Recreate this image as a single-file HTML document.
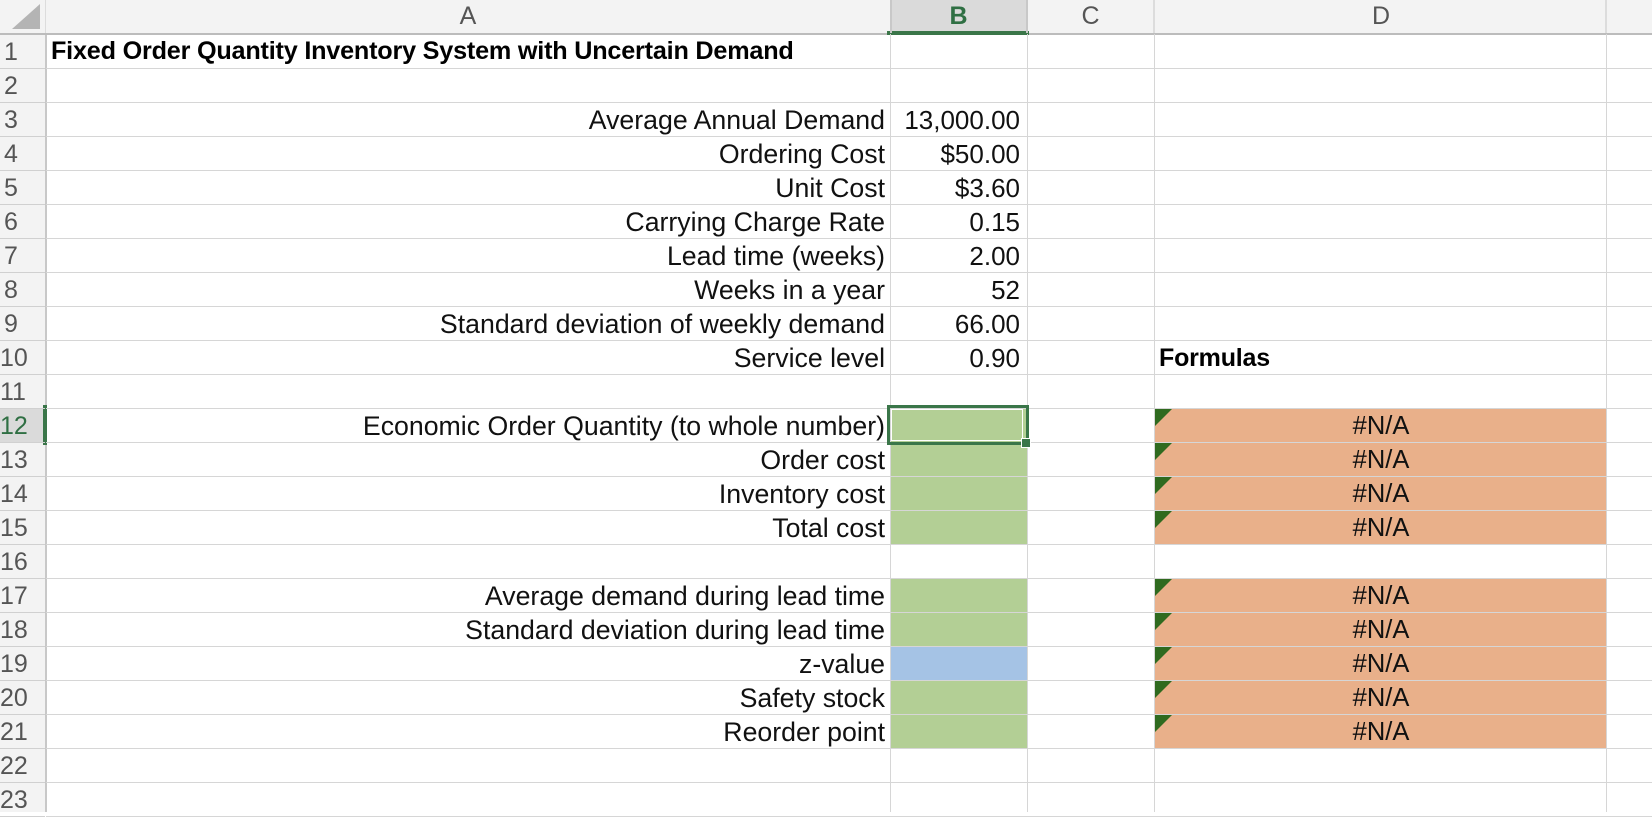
<!DOCTYPE html>
<html><head><meta charset="utf-8"><style>
html,body{margin:0;padding:0;width:1652px;height:812px;overflow:hidden;background:#fff;font-family:"Liberation Sans",Arial,sans-serif;}
.a{position:absolute;}
.hl{position:absolute;left:46px;width:1606px;height:1px;background:#d6d6d6;}
.vl{position:absolute;top:34px;width:1px;height:778px;background:#d6d6d6;}
.rn{position:absolute;left:0;width:22px;text-align:center;font-size:25px;color:#555;line-height:34px;}
.lab{position:absolute;right:767px;font-size:26.7px;line-height:34px;color:#111;white-space:nowrap;}
.val{position:absolute;right:632px;font-size:26px;line-height:34px;color:#111;}
.na{position:absolute;left:1155px;width:452px;text-align:center;font-size:25.5px;line-height:34px;color:#111;}
.tri{position:absolute;left:1155px;width:0;height:0;border-top:17px solid #2f6a1f;border-right:17px solid transparent;}
</style></head><body>
<div class="a" style="left:0;top:0;width:1652px;height:33px;background:#f3f3f3;"></div>
<div class="a" style="left:890px;top:0;width:137px;height:33px;background:#dadada;"></div>
<div class="a" style="left:0;top:33px;width:1652px;height:2px;background:#bcbcbc;"></div>
<div class="a" style="left:887px;top:31px;width:142px;height:4px;background:#3a7649;"></div>
<svg class="a" style="left:10px;top:2px" width="32" height="28"><polygon points="30,2 30,27 2,27" fill="#b4b4b4"/></svg>
<div class="a" style="left:45px;top:0;width:1px;height:33px;background:#dcdcdc"></div>
<div class="a" style="left:890px;top:0;width:2px;height:33px;background:#c8c8c8"></div>
<div class="a" style="left:1026px;top:0;width:2px;height:33px;background:#c8c8c8"></div>
<div class="a" style="left:1153px;top:0;width:2px;height:33px;background:#dcdcdc"></div>
<div class="a" style="left:1605px;top:0;width:2px;height:33px;background:#dcdcdc"></div>
<div class="a" style="left:46px;top:0;width:844px;text-align:center;font-size:25px;line-height:33px;color:#555;">A</div>
<div class="a" style="left:890px;top:0;width:137px;text-align:center;font-size:25px;line-height:33px;color:#2f6f43;font-weight:bold;">B</div>
<div class="a" style="left:1027px;top:0;width:127px;text-align:center;font-size:25px;line-height:33px;color:#555;">C</div>
<div class="a" style="left:1155px;top:0;width:452px;text-align:center;font-size:25px;line-height:33px;color:#555;">D</div>
<div class="a" style="left:0;top:35px;width:45px;height:777px;background:#f3f3f3;"></div>
<div class="a" style="left:0;top:408px;width:45px;height:34px;background:#dadada;"></div>
<div class="a" style="left:45px;top:35px;width:2px;height:777px;background:#c8c8c8;"></div>
<div class="a" style="left:43px;top:405px;width:4px;height:40px;background:#3a7649;"></div>
<div class="a" style="left:891px;top:408px;width:136px;height:136px;background:#b3cf95"></div>
<div class="a" style="left:891px;top:578px;width:136px;height:170px;background:#b3cf95"></div>
<div class="a" style="left:891px;top:646px;width:136px;height:34px;background:#a5c3e5"></div>
<div class="a" style="left:1155px;top:408px;width:452px;height:136px;background:#e9b08a"></div>
<div class="a" style="left:1155px;top:578px;width:452px;height:170px;background:#e9b08a"></div>
<div id="g"></div>
<script>
var h='';
for(var n=1;n<=23;n++){var y=34+n*34;h+='<div class="hl" style="top:'+y+'px"></div>';h+='<div class="a" style="left:0;top:'+(y)+'px;width:45px;height:1px;background:#d0d0d0"></div>';}
[890,1027,1154,1606].forEach(function(x){h+='<div class="vl" style="left:'+x+'px"></div>';});
document.getElementById('g').innerHTML=h;
</script>
<div class="rn" style="top:35px">1</div><div class="rn" style="top:69px">2</div><div class="rn" style="top:103px">3</div><div class="rn" style="top:137px">4</div><div class="rn" style="top:171px">5</div><div class="rn" style="top:205px">6</div><div class="rn" style="top:239px">7</div><div class="rn" style="top:273px">8</div><div class="rn" style="top:307px">9</div><div class="rn" style="top:341px">10</div><div class="rn" style="top:375px">11</div><div class="rn" style="top:409px;color:#2f6f43">12</div><div class="rn" style="top:443px">13</div><div class="rn" style="top:477px">14</div><div class="rn" style="top:511px">15</div><div class="rn" style="top:545px">16</div><div class="rn" style="top:579px">17</div><div class="rn" style="top:613px">18</div><div class="rn" style="top:647px">19</div><div class="rn" style="top:681px">20</div><div class="rn" style="top:715px">21</div><div class="rn" style="top:749px">22</div><div class="rn" style="top:783px">23</div>
<div class="a" style="left:51px;top:35px;font-size:25.2px;font-weight:bold;line-height:32px;letter-spacing:-0.2px;color:#000;white-space:nowrap;">Fixed Order Quantity Inventory System with Uncertain Demand</div>
<div class="lab" style="top:103px">Average Annual Demand</div><div class="val" style="top:103px">13,000.00</div>
<div class="lab" style="top:137px">Ordering Cost</div><div class="val" style="top:137px">$50.00</div>
<div class="lab" style="top:171px">Unit Cost</div><div class="val" style="top:171px">$3.60</div>
<div class="lab" style="top:205px">Carrying Charge Rate</div><div class="val" style="top:205px">0.15</div>
<div class="lab" style="top:239px">Lead time (weeks)</div><div class="val" style="top:239px">2.00</div>
<div class="lab" style="top:273px">Weeks in a year</div><div class="val" style="top:273px">52</div>
<div class="lab" style="top:307px">Standard deviation of weekly demand</div><div class="val" style="top:307px">66.00</div>
<div class="lab" style="top:341px">Service level</div><div class="val" style="top:341px">0.90</div>
<div class="a" style="left:1159px;top:341px;font-size:25px;font-weight:bold;line-height:34px;letter-spacing:-0.2px;">Formulas</div>
<div class="lab" style="top:409px">Economic Order Quantity (to whole number)</div>
<div class="lab" style="top:443px">Order cost</div>
<div class="lab" style="top:477px">Inventory cost</div>
<div class="lab" style="top:511px">Total cost</div>
<div class="lab" style="top:579px">Average demand during lead time</div>
<div class="lab" style="top:613px">Standard deviation during lead time</div>
<div class="lab" style="top:647px">z-value</div>
<div class="lab" style="top:681px">Safety stock</div>
<div class="lab" style="top:715px">Reorder point</div>
<div class="tri" style="top:409px"></div><div class="na" style="top:409px">#N/A</div>
<div class="tri" style="top:443px"></div><div class="na" style="top:443px">#N/A</div>
<div class="tri" style="top:477px"></div><div class="na" style="top:477px">#N/A</div>
<div class="tri" style="top:511px"></div><div class="na" style="top:511px">#N/A</div>
<div class="tri" style="top:579px"></div><div class="na" style="top:579px">#N/A</div>
<div class="tri" style="top:613px"></div><div class="na" style="top:613px">#N/A</div>
<div class="tri" style="top:647px"></div><div class="na" style="top:647px">#N/A</div>
<div class="tri" style="top:681px"></div><div class="na" style="top:681px">#N/A</div>
<div class="tri" style="top:715px"></div><div class="na" style="top:715px">#N/A</div>
<div class="a" style="left:887px;top:405px;width:136px;height:34px;border:3px solid #3a7649;"></div>
<div class="a" style="left:891px;top:409px;width:130px;height:30px;border:1px solid #fff;"></div>
<div class="a" style="left:1021px;top:438px;width:8px;height:8px;background:#3a7649;border:1px solid #fff;"></div>
</body></html>
